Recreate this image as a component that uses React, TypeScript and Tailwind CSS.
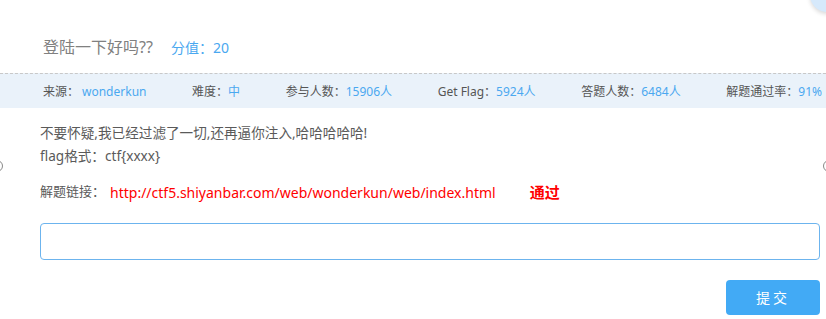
import { useState } from 'react'

const stats = [
  { label: '来源：', value: 'wonderkun', gap: 'ml-[3px]' },
  { label: '难度：', value: '中', gap: '' },
  { label: '参与人数：', value: '15906人', gap: '' },
  { label: 'Get Flag：', value: '5924人', gap: '' },
  { label: '答题人数：', value: '6484人', gap: '' },
  { label: '解题通过率：', value: '91%', gap: '' },
]

export default function App() {
  const [flag, setFlag] = useState('')

  return (
    <div
      className="relative w-[826px] h-[319px] overflow-hidden bg-white text-[#555]"
      style={{ fontFamily: '"Microsoft YaHei", "Noto Sans", "Noto Sans CJK SC", sans-serif' }}
    >
      {/* floating bits cut off at the edges */}
      <div className="absolute right-[-18px] top-[-22px] w-[34px] h-[34px] rounded-full bg-[#d6e9fb] shadow-[0_2px_4px_rgba(0,0,0,0.15)]" />
      <div className="absolute left-[-9px] top-[160px] w-[12px] h-[12px] rounded-full border border-[#888]" />
      <div className="absolute right-[-9px] top-[160px] w-[12px] h-[12px] rounded-full border border-[#888]" />

      <div className="flex items-baseline pl-[43px] pt-[36px] h-[73px]">
        <h1 className="text-[16px] leading-[22px] text-[#808080]">登陆一下好吗??</h1>
        <span className="ml-[18px] text-[14px] text-[#4aa8f0]">分值：20</span>
      </div>

      <div className="flex items-center justify-between h-[35px] pt-[2px] pl-[43px] pr-[4px] bg-[#eaf2fa] border-t border-dashed border-[#c8c8c8] text-[12px]">
        {stats.map((s) => (
          <div key={s.label} className="flex items-center">
            <span className="text-[#555]">{s.label}</span>
            <span className={`text-[#4aa8f0] ${s.gap}`}>{s.value}</span>
          </div>
        ))}
      </div>

      <div className="pl-[40px] pr-[6px] pt-[13px]">
        <p className="text-[13.6px] leading-[23px] text-[#5a5a5a]">不要怀疑,我已经过滤了一切,还再逼你注入,哈哈哈哈哈!</p>
        <p className="text-[13.6px] leading-[23px] text-[#5a5a5a]">flag格式：ctf{'{'}xxxx{'}'}</p>

        <div className="flex items-center mt-[13px] h-[24px] text-[13px]">
          <span className="text-[#5a5a5a]">解题链接：</span>
          <a href="#" className="ml-[5px] text-[14px] text-[#ff0000]">http://ctf5.shiyanbar.com/web/wonderkun/web/index.html</a>
          <span className="ml-[34px] text-[15px] font-bold text-[#ff0000]">通过</span>
        </div>

        <input
          value={flag}
          onChange={(e) => setFlag(e.target.value)}
          className="block mt-[19px] w-[780px] h-[37px] rounded-[4px] border border-[#6cb4ee] px-3 text-[14px] outline-none"
        />

        <div className="flex justify-end w-[780px] mt-[20px]">
          <button className="w-[94px] h-[35px] rounded-[4px] bg-[#42aaf5] text-white text-[14px] tracking-[3px]">提交</button>
        </div>
      </div>
    </div>
  )
}
